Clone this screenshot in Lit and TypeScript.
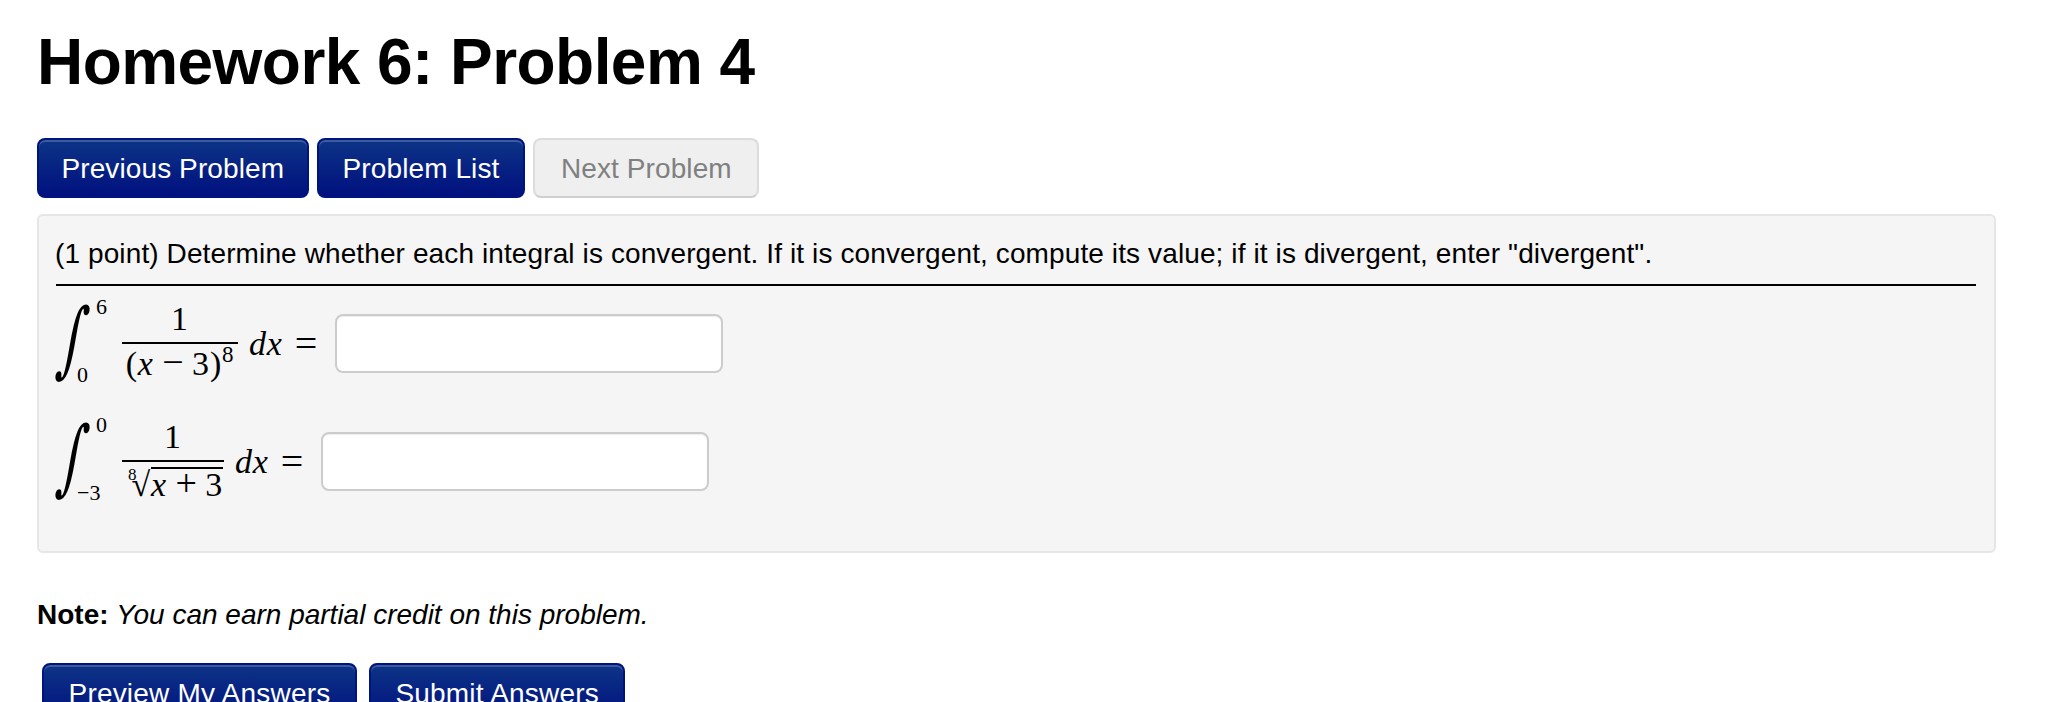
import { LitElement, html, css } from "lit";
import { customElement } from "lit/decorators.js";

@customElement("app-root")
export class AppRoot extends LitElement {
  static styles = css`
    :host { display: block; height: 702px; overflow: hidden; box-sizing: border-box; padding: 26px 66px 0 37px; font-family: "Liberation Sans", Arial, sans-serif; color: #000; background: #fff; }
    h1 { margin: 0; font-size: 64px; line-height: 72px; font-weight: 700; letter-spacing: -0.55px; }
    .nav { display: flex; gap: 8px; margin-top: 40px; }
    .bottom { display: flex; gap: 12px; margin-left: 5px; margin-top: 30px; }
    .btn { box-sizing: border-box; height: 60px; padding: 1px 22.5px 0; display: flex; align-items: center; font: 28px/1 "Liberation Sans", Arial, sans-serif; letter-spacing: 0.1px; border-radius: 8px; color: #fff; background: linear-gradient(#0d3486, #00107f); border: 2px solid #00147f; box-shadow: inset 0 2px 0 rgba(255,255,255,.2); }
    .list { padding: 1px 24px 0; }
    .bottom .btn { padding: 1px 24.5px 0; letter-spacing: 0.2px; }
    .btn.off { padding: 1px 25.5px 0; color: #808080; background: #efefef; border-color: #dcdcdc; border-bottom-color: #cfcfcf; box-shadow: none; }
    .panel { box-sizing: border-box; height: 339px; margin-top: 16px; padding: 20px 18px 0 17px; border: 2px solid #e6e6e6; border-radius: 6px; background: #f5f5f5; }
    .lead { margin: 0; font-size: 28px; line-height: 36px; letter-spacing: 0.11px; text-indent: -1px; padding-bottom: 12px; border-bottom: 2px solid #000; }
    .row { display: flex; align-items: center; height: 59px; margin-top: 28px; }
    .row + .row { margin-top: 59px; }
    .math { display: flex; align-items: center; font-family: "Liberation Serif", "Times New Roman", serif; font-size: 34px; letter-spacing: 0.8px; }
    .int { display: grid; grid-template-columns: 21px 45px; grid-template-rows: 45px 45px; }
    .sign { grid-row: 1 / 3; display: flex; align-items: center; justify-content: center; font-family: "DejaVu Serif", serif; font-size: 50px; line-height: 90px; transform: translate(7px, -5px) skewX(-9deg) scale(1, 1.65); }
    .sup, .sub { font-size: 22px; line-height: 22px; letter-spacing: 0; }
    .sup { margin: -3px 0 0 19px; align-self: start; }
    .sub { align-self: end; margin-bottom: 3px; }
    .frac { display: flex; flex-direction: column; align-items: center; margin-right: 11px; }
    .w1 { width: 116px; }
    .w2 { width: 102px; }
    .num { line-height: 38px; padding-bottom: 4px; }
    .den { border-top: 2px solid #000; align-self: stretch; box-sizing: border-box; padding: 1px 0 4px; text-align: center; line-height: 38px; white-space: nowrap; }
    .den sup { font-size: 23px; line-height: 0; vertical-align: 13px; }
    i { font-style: italic; }
    .eq { margin-left: 12px; width: 21px; font-size: 40px; line-height: 0; text-align: center; letter-spacing: 0; }
    .op { font-size: 38px; line-height: 0; letter-spacing: 0; margin: 0 8.5px; }
    .den.root { display: flex; align-items: flex-start; padding: 5px 2px 0 4px; height: 45px; }
    .index { font-size: 17px; line-height: 17px; margin: -1px -5px 0 2px; letter-spacing: 0; }
    .surd { font-size: 34px; line-height: 32px; margin-top: 2px; }
    .rad { border-top: 2px solid #000; line-height: 32px; display: block; }
    .box { box-sizing: border-box; width: 388px; height: 59px; margin-left: 19px; background: #fff; border: 2px solid #cccccc; border-radius: 8px; box-shadow: inset 0 1px 1px rgba(0,0,0,.075); }
    .note { margin: 44px 0 0; font-size: 28px; line-height: 36px; }
  `;

  render() {
    return html`
      <h1>Homework 6: Problem 4</h1>
      <div class="nav">
        <div class="btn">Previous Problem</div>
        <div class="btn list">Problem List</div>
        <div class="btn off">Next Problem</div>
      </div>
      <div class="panel">
        <p class="lead">(1 point) Determine whether each integral is convergent. If it is convergent, compute its value; if it is divergent, enter "divergent".</p>
        <div class="row">
          <div class="math">
            <div class="int"><span class="sign">∫</span><span class="sup">6</span><span class="sub">0</span></div>
            <div class="frac w1"><div class="num">1</div><div class="den">(<i>x</i><span class="op">−</span>3)<sup>8</sup></div></div>
            <span><i>dx</i></span><span class="eq">=</span>
          </div>
          <div class="box"></div>
        </div>
        <div class="row">
          <div class="math">
            <div class="int"><span class="sign">∫</span><span class="sup">0</span><span class="sub">−3</span></div>
            <div class="frac w2"><div class="num">1</div><div class="den root"><span class="index">8</span><span class="surd">√</span><span class="rad"><i>x</i><span class="op">+</span>3</span></div></div>
            <span><i>dx</i></span><span class="eq">=</span>
          </div>
          <div class="box"></div>
        </div>
      </div>
      <p class="note"><b>Note:</b> <i>You can earn partial credit on this problem.</i></p>
      <div class="bottom">
        <div class="btn">Preview My Answers</div>
        <div class="btn">Submit Answers</div>
      </div>
    `;
  }
}
